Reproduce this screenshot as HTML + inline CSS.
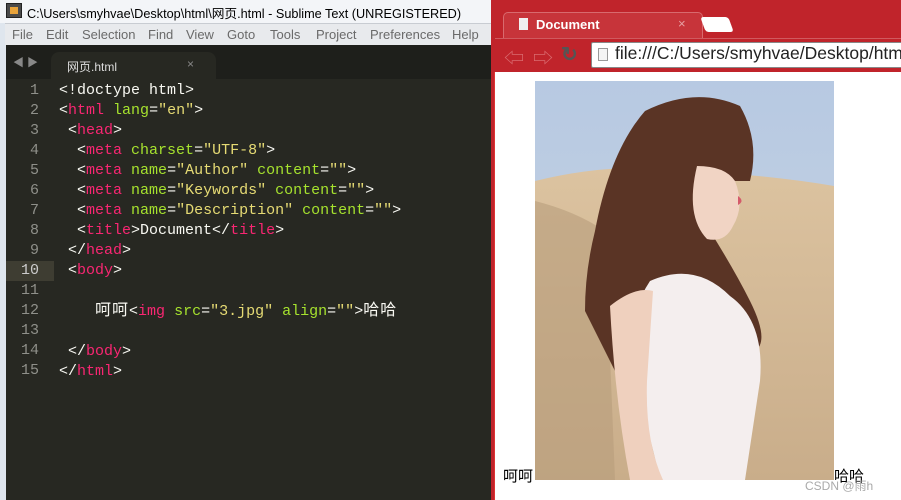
<!DOCTYPE html>
<html><head><meta charset="utf-8"><style>
*{margin:0;padding:0;box-sizing:border-box}
body{width:901px;height:500px;overflow:hidden;background:#fff;position:relative;font-family:"Liberation Sans","Noto Sans CJK SC",sans-serif}
.abs{position:absolute}
#title{left:0;top:0;width:491px;height:23px;background:#f3f5f8;font-size:12.7px;color:#000;}
#title span{position:absolute;left:27px;top:3px;white-space:nowrap}
#menu{left:5px;top:23px;width:486px;height:22px;background:#e8eaed;border-top:1px solid #c8ccd2;font-size:13px;color:#6a6a6a}
#menu span{position:absolute;top:3px}
#tabs{left:6px;top:45px;width:485px;height:34px;background:#1e1f1b}
#tab{left:51px;top:52px;width:165px;height:28px;background:#272822;border-radius:8px 8px 0 0;color:#ddd;font-size:12px}
#code{left:6px;top:79px;width:485px;height:421px;background:#272822}
#code pre{position:absolute;left:53px;top:2px;font-family:"Liberation Mono","Noto Sans CJK SC",monospace;font-size:15px;line-height:20px;color:#f8f8f2}
#nums{position:absolute;left:0;top:2px;width:33px;text-align:right;font-family:"Liberation Mono",monospace;font-size:15px;line-height:20px;color:#8f908a}
.t{color:#f92672}.a{color:#a6e22e}.s{color:#e6db74}
.c{font-size:16px;letter-spacing:1px}
#browser{left:491px;top:0;width:410px;height:500px;background:#c0242b}
</style></head><body>
<div class="abs" style="left:0;top:0;width:6px;height:500px;background:#dfe6ee"></div>
<div id="title" class="abs"><div class="abs" style="left:6px;top:3px;width:16px;height:15px;background:#4a4a4a;border:1px solid #222"><div style="margin:3px;width:8px;height:7px;background:#e8a33a"></div></div><span>C:\Users\smyhvae\Desktop\html\网页.html - Sublime Text (UNREGISTERED)</span></div>
<div id="menu" class="abs"><span style="left:7px">File</span><span style="left:41px">Edit</span><span style="left:77px">Selection</span><span style="left:143px">Find</span><span style="left:181px">View</span><span style="left:222px">Goto</span><span style="left:265px">Tools</span><span style="left:311px">Project</span><span style="left:365px">Preferences</span><span style="left:447px">Help</span></div>
<div id="tabs" class="abs"><span style="position:absolute;left:7px;top:9px;color:#888;font-size:11px">◀ ▶</span></div>
<div id="tab" class="abs"><span style="position:absolute;left:16px;top:6px">网页.html</span><span style="position:absolute;left:136px;top:5px;color:#888">×</span></div>
<div id="code" class="abs">
<div class="abs" style="left:0;top:182px;width:48px;height:20px;background:#3e3d32"></div>
<div id="nums">1<br>2<br>3<br>4<br>5<br>6<br>7<br>8<br>9<br><span style="color:#ccc">10</span><br>11<br>12<br>13<br>14<br>15</div>
<pre>&lt;!doctype html&gt;
&lt;<span class="t">html</span> <span class="a">lang</span>=<span class="s">"en"</span>&gt;
 &lt;<span class="t">head</span>&gt;
  &lt;<span class="t">meta</span> <span class="a">charset</span>=<span class="s">"UTF-8"</span>&gt;
  &lt;<span class="t">meta</span> <span class="a">name</span>=<span class="s">"Author"</span> <span class="a">content</span>=<span class="s">""</span>&gt;
  &lt;<span class="t">meta</span> <span class="a">name</span>=<span class="s">"Keywords"</span> <span class="a">content</span>=<span class="s">""</span>&gt;
  &lt;<span class="t">meta</span> <span class="a">name</span>=<span class="s">"Description"</span> <span class="a">content</span>=<span class="s">""</span>&gt;
  &lt;<span class="t">title</span>&gt;Document&lt;/<span class="t">title</span>&gt;
 &lt;/<span class="t">head</span>&gt;
 &lt;<span class="t">body</span>&gt;

    <span class="c">呵呵</span>&lt;<span class="t">img</span> <span class="a">src</span>=<span class="s">"3.jpg"</span> <span class="a">align</span>=<span class="s">""</span>&gt;<span class="c">哈哈</span>

 &lt;/<span class="t">body</span>&gt;
&lt;/<span class="t">html</span>&gt;</pre>
</div>
<div class="abs" style="left:491px;top:0;width:3px;height:500px;background:#b8b8b8"></div>
<div id="browser" class="abs">
<div class="abs" style="left:12px;top:12px;width:200px;height:26px;background:#c7343a;border:1px solid #d86a6e;border-bottom:none;border-radius:5px 5px 0 0"></div>
<div class="abs" style="left:28px;top:18px;width:9px;height:12px;background:#f0f0f0"></div>
<span class="abs" style="left:45px;top:17px;color:#fff;font-size:13px;font-weight:bold">Document</span>
<span class="abs" style="left:187px;top:16px;color:#e7a0a3;font-size:13px">×</span>
<div class="abs" style="left:212px;top:17px;width:28px;height:15px;background:#fff;border-radius:3px;transform:skewX(20deg)"></div>
<div class="abs" style="left:4px;top:38px;width:406px;height:34px;background:#c0242b;border-top:1px solid #d05a5f"></div>
<span class="abs" style="left:13px;top:42px;color:#d96a6e;font-size:20px">⇦</span>
<span class="abs" style="left:42px;top:42px;color:#d96a6e;font-size:20px">⇨</span>
<span class="abs" style="left:70px;top:42px;color:#555;font-size:20px;font-weight:bold">↻</span>
<div class="abs" style="left:100px;top:42px;width:320px;height:26px;background:#fff;border:1px solid #888;border-radius:2px"></div>
<div class="abs" style="left:107px;top:48px;width:10px;height:13px;border:1px solid #999;background:#f4f4f4"></div>
<span class="abs" style="left:124px;top:43px;font-size:17.5px;color:#222;white-space:nowrap">file:///C:/Users/smyhvae/Desktop/html</span>
<div class="abs" style="left:4px;top:72px;width:406px;height:428px;background:#fff"></div>
</div>
<div class="abs" style="left:494px;top:72px;width:1px;height:428px;background:#d33"></div>
<svg class="abs" style="left:535px;top:81px" width="299" height="399" viewBox="0 0 299 399">
<defs><linearGradient id="sky" x1="0" y1="0" x2="0" y2="1"><stop offset="0" stop-color="#b7c9e2"/><stop offset="1" stop-color="#cbd6e2"/></linearGradient>
<linearGradient id="sand" x1="0" y1="0" x2="0" y2="1"><stop offset="0" stop-color="#dcc3a0"/><stop offset="1" stop-color="#c9ad8a"/></linearGradient></defs>
<rect width="299" height="399" fill="url(#sky)"/>
<path d="M0 100 Q80 80 160 90 Q240 95 299 105 L299 399 L0 399Z" fill="url(#sand)"/>
<path d="M0 120 Q40 130 70 150 L80 399 L0 399Z" fill="#b89d7c" opacity=".6"/>
<path d="M110 30 Q160 5 205 25 Q225 60 215 100 L190 100 L175 150 Q200 190 215 220 Q235 260 220 270 L180 240 L120 215 Q85 240 80 290 L50 230 Q50 190 60 150 Q75 70 110 30Z" fill="#5a3425"/>
<path d="M162 85 Q190 85 200 100 Q210 125 198 145 Q190 162 172 158 Q150 135 162 85Z" fill="#f1d4c4"/>
<path d="M115 200 Q160 180 195 215 Q230 240 225 300 L210 399 L125 399 Q110 330 90 280 Q95 230 115 200Z" fill="#f4eeee"/>
<path d="M75 225 Q100 205 118 210 L112 300 Q110 360 128 399 L95 399 Q80 320 75 225Z" fill="#efd0be"/>
<path d="M203 115 Q210 120 203 124 Z" fill="#d45a6a"/>
</svg>
<span class="abs" style="left:503px;top:465px;font-size:15px">呵呵</span>
<span class="abs" style="left:834px;top:465px;font-size:15px">哈哈</span>
<span class="abs" style="left:805px;top:477px;font-size:12px;color:#aaa">CSDN @雨h</span>
</body></html>
